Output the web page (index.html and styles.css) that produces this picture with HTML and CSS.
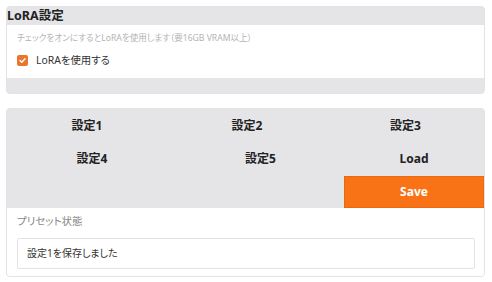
FILE: index.html
```html
<!DOCTYPE html>
<html lang="ja">
<head>
<meta charset="utf-8">
<link rel="stylesheet" href="styles.css">
</head>
<body>
<div class="page">
  <section class="card lora">
    <div class="lora-head">LoRA設定</div>
    <div class="lora-body">
      <div class="desc">チェックをオンにするとLoRAを使用します（要16GB VRAM以上）</div>
      <label class="check">
        <span class="box"><svg width="11" height="11" viewBox="0 0 11 11"><path d="M3 5.6 L4.8 7.3 L8 3.8" fill="none" stroke="#fff" stroke-width="1.4" stroke-linecap="round" stroke-linejoin="round"/></svg></span>
        <span class="check-label">LoRAを使用する</span>
      </label>
    </div>
    <div class="lora-foot"></div>
  </section>

  <section class="card preset">
    <div class="grid">
      <div class="row row1">
        <button class="btn">設定1</button>
        <button class="btn">設定2</button>
        <button class="btn">設定3</button>
      </div>
      <div class="row row2">
        <button class="btn">設定4</button>
        <button class="btn">設定5</button>
        <button class="btn">Load</button>
      </div>
      <div class="row row3">
        <div></div>
        <div></div>
        <button class="btn save">Save</button>
      </div>
    </div>
    <div class="status">
      <div class="status-label">プリセット状態</div>
      <div class="status-box">設定1を保存しました</div>
    </div>
  </section>
</div>
</body>
</html>
```

FILE: styles.css
```css
* { box-sizing: border-box; }
html, body { margin: 0; padding: 0; background: #fff; }
body {
  font-family: "Noto Sans", "Noto Sans CJK JP", sans-serif;
  font-feature-settings: "palt";
  color: #222;
}
.page {
  width: 479px;
  margin: 6px 0 0 6px;
  display: flex;
  flex-direction: column;
  gap: 14px;
}
.card {
  border: 1px solid #e3e3e6;
  border-radius: 4px;
  background: #e5e5e8;
  overflow: hidden;
}
.lora { height: 88px; display: flex; flex-direction: column; }
.lora-head {
  height: 18px;
  line-height: 18px;
  font-size: 12.5px;
  font-weight: 700;
  color: #222;
}
.lora-body {
  height: 53px;
  background: #fff;
  padding: 6px 10px 0;
}
.desc {
  font-size: 8.6px;
  color: #b4b4b4;
  line-height: 14px;
}
.check {
  display: flex;
  align-items: center;
  gap: 8px;
  margin-top: 9px;
}
.box {
  width: 11px;
  height: 11px;
  border-radius: 2px;
  background: #e8772e;
  display: flex;
}
.check-label { font-size: 10.4px; line-height: 12px; color: #333; }
.lora-foot { flex: 1; }

.preset { height: 169px; display: flex; flex-direction: column; }
.grid { height: 99px; display: flex; flex-direction: column; }
.row { display: grid; }
.row1 { grid-template-columns: 160px 160px 1fr; height: 33px; }
.row2 { grid-template-columns: 170px 167px 1fr; height: 34px; }
.row3 { grid-template-columns: 170px 167px 1fr; height: 32px; }
.btn {
  border: 0;
  background: transparent;
  font-family: inherit;
  font-feature-settings: "palt";
  font-size: 12px;
  font-weight: 700;
  color: #222;
  padding: 0 0 2px;
  cursor: pointer;
}
.save {
  background: #f97316;
  border: 1px solid #e8690f;
  color: #fff;
}
.status {
  flex: 1;
  background: #fff;
  padding: 5px 9px 0 10px;
}
.status-label {
  font-size: 10.5px;
  line-height: 16px;
  color: #888;
}
.status-box {
  margin-top: 9px;
  height: 31px;
  border: 1px solid #e3e3e6;
  border-radius: 2px;
  padding-left: 9px;
  font-size: 10px;
  line-height: 29px;
  color: #333;
}
```
